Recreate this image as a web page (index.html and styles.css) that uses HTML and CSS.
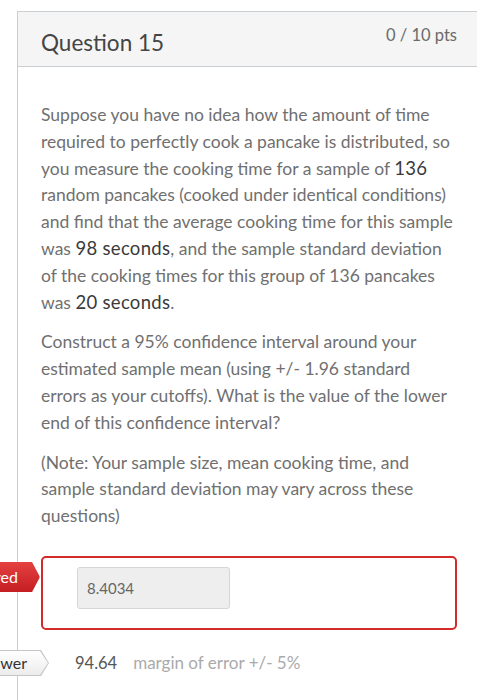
FILE: index.html
```html
<!DOCTYPE html>
<html lang="en">
<head>
<meta charset="utf-8">
<title>Question 15</title>
<link rel="stylesheet" href="styles.css">
</head>
<body>
<div class="card">
  <div class="card-header">
    <h2 class="q-title">Question 15</h2>
    <div class="q-points">0 / 10 pts</div>
  </div>
  <div class="card-body">
    <p>Suppose you have no idea how the amount of time required to perfectly cook a pancake is distributed, so you measure the cooking time for a sample of <span class="num">136</span> random pancakes (cooked under identical conditions) and find that the average cooking time for this sample was <span class="num">98 seconds</span>, and the sample standard deviation of the cooking times for this group of 136 pancakes was <span class="num">20 seconds</span>.</p>
    <p>Construct a 95% confidence interval around your estimated sample mean (using +/- 1.96 standard errors as your cutoffs). What is the value of the lower end of this confidence interval?</p>
    <p>(Note: Your sample size, mean cooking time, and sample standard deviation may vary across these questions)</p>
  </div>
  <div class="answers">
    <div class="answer-row answered">
      <span class="flag flag-wrong">You Answered</span>
      <div class="answer-box">
        <div class="answer-input">8.4034</div>
      </div>
    </div>
    <div class="answer-row correct">
      <span class="flag flag-right"><span class="flag-text">Correct Answer</span></span>
      <span class="correct-value">94.64</span>
      <span class="margin">margin of error +/- 5%</span>
    </div>
  </div>
</div>
</body>
</html>
```

FILE: styles.css
```css
html, body {
  margin: 0;
  padding: 0;
  background: #ffffff;
}
body {
  font-family: Lato, "Open Sans", "Liberation Sans", sans-serif;
  color: #666666;
  overflow: hidden;
}
.card {
  margin: 11px 0 0 17px;
  border-left: 1px solid #c9ced2;
  border-top: 1px solid #c9ced2;
  min-height: 720px;
}
.card-header {
  background: #f5f5f5;
  height: 54px;
  border-bottom: 1px solid #c9ced2;
  display: flex;
  justify-content: space-between;
  align-items: flex-start;
  padding: 0 20px 0 23px;
}
.q-title {
  margin: 18px 0 0 0;
  font-size: 22.5px;
  font-weight: 400;
  color: #444444;
  line-height: 26px;
}
.q-points {
  margin-top: 12px;
  font-size: 16.5px;
  color: #6a6a6a;
  line-height: 22px;
}
.card-body {
  padding: 35px 22px 0 23px;
  font-size: 17.5px;
  line-height: 26.8px;
  color: #707070;
}
.card-body p {
  margin: 0 0 13px 0;
}
.num {
  color: #3a3a3a;
  font-size: 18.5px;
  letter-spacing: 0.3px;
  line-height: 20px;
}
.answers {
  padding: 13px 20px 0 23px;
}
.answer-row {
  position: relative;
}
.answer-box {
  border: 2px solid #d42a2a;
  border-radius: 5px;
  height: 74px;
  padding: 9px 34px;
  box-sizing: border-box;
}
.answer-input {
  width: 153px;
  height: 42px;
  box-sizing: border-box;
  background: #eeeeee;
  border: 1px solid #d6d6d6;
  border-radius: 3px;
  padding: 0 9px;
  font-size: 15px;
  line-height: 40px;
  color: #666666;
}
.flag {
  position: absolute;
  left: -1px;
  transform: translateX(-100%);
  white-space: nowrap;
  font-size: 16px;
}
.flag-wrong {
  top: 6px;
  height: 30px;
  line-height: 30px;
  padding: 0 22px 0 10px;
  color: #ffffff;
  background: linear-gradient(#e54141, #c41d22);
  clip-path: polygon(0 0, calc(100% - 8px) 0, 100% 50%, calc(100% - 8px) 100%, 0 100%);
}
.correct {
  display: flex;
  align-items: center;
  height: 50px;
  margin-top: 8px;
}
.flag-right {
  top: 12px;
  height: 26px;
  padding: 0 22px 0 10px;
  background: #c6c6c6;
  clip-path: polygon(0 0, calc(100% - 8px) 0, 100% 50%, calc(100% - 8px) 100%, 0 100%);
  left: 8px;
}
.flag-right::before {
  content: "";
  position: absolute;
  inset: 1px 1px 1px 0;
  background: linear-gradient(#ffffff, #ececec);
  clip-path: polygon(0 0, calc(100% - 8px) 0, 100% 50%, calc(100% - 8px) 100%, 0 100%);
}
.flag-text {
  position: relative;
  line-height: 26px;
  color: #333333;
}
.correct-value {
  margin-left: 34px;
  font-size: 16.5px;
  color: #555555;
}
.margin {
  margin-left: 16px;
  font-size: 17px;
  color: #aaaaaa;
}
```
